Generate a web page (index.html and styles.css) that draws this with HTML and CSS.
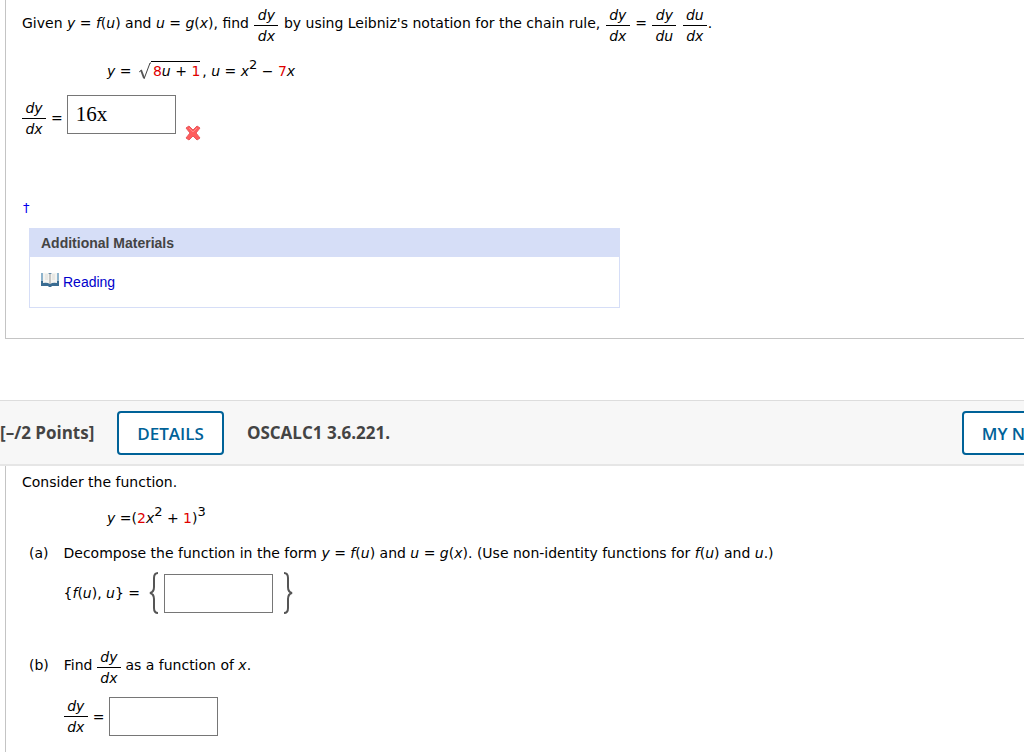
FILE: index.html
```html
<!DOCTYPE html>
<html lang="en">
<head>
<meta charset="UTF-8">
<meta name="viewport" content="width=device-width, initial-scale=1.0">
<title>Chain Rule Homework</title>
<link rel="stylesheet" href="styles.css">
</head>
<body>

<section class="question first">
  <p class="prompt">Given <i>y</i> = <i>f</i>(<i>u</i>) and <i>u</i> = <i>g</i>(<i>x</i>), find <span class="frac"><i>dy</i><i>dx</i></span> by using Leibniz's notation for the chain rule, <span class="frac"><i>dy</i><i>dx</i></span> = <span class="frac"><i>dy</i><i>du</i></span> <span class="frac"><i>du</i><i>dx</i></span>.</p>

  <p class="equation"><i>y</i> = <span class="root"><svg width="13" height="18" viewBox="0 0 13 18"><path d="M1 10l3-2" fill="none" stroke="#666" stroke-width="1"/><path d="M3 8l3 8" fill="none" stroke="#555" stroke-width="2"/><path d="M6 17L12 1h1" fill="none" stroke="#444" stroke-width="1"/></svg><span class="radicand"><b>8</b><i>u</i> + <b>1</b></span></span>, <i>u</i> = <i>x</i><sup>2</sup> − <b>7</b><i>x</i></p>

  <div class="answer">
    <label class="answer-label" for="answer1"><span class="frac"><i>dy</i><i>dx</i></span> =</label>
    <input type="text" class="answer-box" id="answer1" value="16x">
    <svg class="wrong" width="16" height="16" viewBox="0 0 16 16" role="img" aria-label="Incorrect"><path d="M1 3l3-2 4 4 4-4 3 2-4 5 4 5-3 2-4-4-4 4-3-2 4-5z" fill="#ff5c5c" stroke="#e8585c" stroke-linejoin="round"/><path d="M4 3l4 4 4-4" fill="none" stroke="#ff8a8a" stroke-width="1"/></svg>
  </div>

  <a class="dagger" href="#">†</a>

  <div class="materials">
    <h2>Additional Materials</h2>
    <div class="materials-body">
      <svg width="18" height="16" viewBox="0 0 18 16"><path d="M0 1h18v13h-7l-1 1H8l-1-1H0z" fill="#3a6c92"/><path d="M0 1h2v8H0zM16 1h2v8h-2z" fill="#8db3cc"/><path d="M2 1q4-1 7 1v10q-3-2-7-1zM16 1q-4-1-7 1v10q3-2 7-1z" fill="#f4f4f1"/><path d="M9 2v10" fill="none" stroke="#999"/><path d="M4 3h3M4 5h3M4 7h3M11 3h3M11 5h3M11 7h3" fill="none" stroke="#dcdcd8"/></svg>
      <a href="#">Reading</a>
    </div>
  </div>
</section>

<header class="bar">
  <span class="points">[–/2 Points]</span>
  <button type="button" class="btn">DETAILS</button>
  <span class="code">OSCALC1 3.6.221.</span>
  <button type="button" class="btn notes">MY NOTES</button>
</header>

<section class="question second">
  <p>Consider the function.</p>
  <p class="equation">
    <i>y</i> =(<b>2</b><i>x</i><sup>2</sup> + <b>1</b>)<sup>3</sup>
  </p>

  <div class="part">
    <span>(a)</span>
    <div class="part-body">
      <p>Decompose the function in the form <i>y</i> = <i>f</i>(<i>u</i>) and <i>u</i> = <i>g</i>(<i>x</i>). (Use non-identity functions for <i>f</i>(<i>u</i>) and <i>u</i>.)</p>
      <div class="answer braces">
        <label for="answer2">{<i>f</i>(<i>u</i>), <i>u</i>} =</label>
        <svg width="10" height="42" viewBox="0 0 10 42"><path d="M9 1Q5 1 5 6v9q0 5-4 6 4 1 4 6v9q0 5 4 5" fill="none" stroke="#555" stroke-width="2"/></svg>
        <input type="text" class="answer-box" id="answer2">
        <svg width="10" height="42" viewBox="0 0 10 42"><path d="M1 1q4 0 4 5v9q0 5 4 6-4 1-4 6v9q0 5-4 5" fill="none" stroke="#555" stroke-width="2"/></svg>
      </div>
    </div>
  </div>

  <div class="part">
    <span class="letter-b">(b)</span>
    <div class="part-body">
      <p>Find <span class="frac"><i>dy</i><i>dx</i></span> as a function of <i>x</i>.</p>
      <div class="answer last">
        <label class="answer-label" for="answer3"><span class="frac"><i>dy</i><i>dx</i></span> =</label>
        <input type="text" class="answer-box" id="answer3">
      </div>
    </div>
  </div>
</section>

</body>
</html>
```
FILE: styles.css
```css
* {
  box-sizing: border-box;
}

body {
  margin: 0;
  background-color: #fff;
  color: #000;
  font-family: Verdana, "DejaVu Sans", sans-serif;
  font-size: 14px;
  line-height: 20px;
  overflow-x: hidden;
}

p {
  margin: 0;
}

/* randomized numbers */
b {
  color: #e00000;
  font-weight: normal;
}

sup {
  font-size: 13px;
  line-height: 0;
  vertical-align: 7px;
}

.question {
  margin-left: 5px;
  padding-left: 16px;
  border-left: 1px solid #c4c4c4;
}

.first {
  padding-top: 5px;
  padding-bottom: 30px;
  border-bottom: 1px solid #c4c4c4;
}

.second {
  padding-top: 6px;
  padding-bottom: 20px;
}

/* fraction */
.frac {
  display: inline-flex;
  flex-direction: column;
  width: 24px;
  text-align: center;
  vertical-align: 8px;
}

.frac i {
  line-height: 20px;
}

.frac i:first-child {
  border-bottom: 1px solid #000;
}

.prompt .frac {
  margin: 0 1px;
}

.equation {
  padding-left: 85px;
}

.first .equation {
  margin: 15px 0 14px;
}

.root {
  margin: 0 2px;
}

.root svg {
  vertical-align: -4px;
}

.radicand {
  display: inline-block;
  border-top: 1px solid #000;
  line-height: 18px;
  padding-left: 2px;
}

.answer {
  display: flex;
  align-items: center;
}

.answer-label {
  display: flex;
  align-items: center;
  gap: 5px;
  margin-right: 4px;
}

.answer-box {
  width: 109px;
  height: 39px;
  padding: 0 8px;
  border: 1px solid #767676;
  background-color: #fff;
  font-family: "Liberation Serif", serif;
  font-size: 21px;
}

.first .answer-box {
  align-self: flex-start;
}

.wrong {
  margin: 30px 0 0 9px;
}

.dagger {
  display: block;
  margin: 57px 0 0 1px;
  color: #0000ee;
  font-size: 13px;
  text-decoration: none;
}

.materials {
  max-width: 591px;
  margin: 10px 7px 0;
  border: 1px solid #d6def7;
  font-family: Arial, "Liberation Sans", sans-serif;
}

.materials h2 {
  margin: 0;
  padding: 4px 11px;
  background-color: #d6def7;
  color: #444;
  font-size: 14px;
}

.materials-body {
  display: flex;
  gap: 4px;
  padding: 15px 11px;
}

.materials-body a {
  color: #0000cc;
  text-decoration: none;
}

/* question header bar, runs past the right edge */
.bar {
  display: flex;
  align-items: center;
  margin: 61px -63px 0 0;
  padding: 10px 0 9px;
  border-top: 1px solid #ddd;
  border-bottom: 2px solid #e6e6e6;
  background-color: #f7f7f7;
  color: #444;
  font-family: "Open Sans", sans-serif;
  font-size: 17px;
  font-weight: bold;
  white-space: nowrap;
}

.btn {
  height: 44px;
  margin: 0 23px;
  padding: 0 18px;
  border: 2px solid #006298;
  border-radius: 4px;
  background-color: #fff;
  color: #006298;
  font-family: "Open Sans", sans-serif;
  font-size: 17px;
  font-weight: 600;
}

.notes {
  margin: 0 0 0 auto;
}

.second .equation {
  margin: 16px 0 15px;
}

.part {
  display: flex;
  gap: 15px;
  padding-left: 7px;
}

.braces {
  margin: 9px 0 33px;
}

.braces label {
  margin-right: 9px;
}

.braces .answer-box {
  margin: 0 10px 0 5px;
}

.letter-b {
  padding-top: 8px;
}

.last {
  margin-top: 8px;
}
```
